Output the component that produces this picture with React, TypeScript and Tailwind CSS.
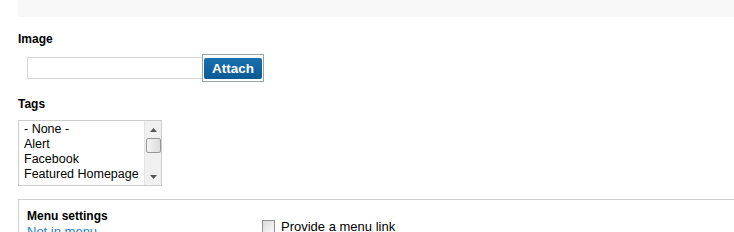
export default function App() {
  const tags = ["- None -", "Alert", "Facebook", "Featured Homepage"];

  return (
    <div
      className="w-[734px] h-[232px] overflow-hidden bg-white text-black"
      style={{ fontFamily: '"Liberation Sans", Arial, sans-serif' }}
    >
      {/* top strip */}
      <div className="ml-[18px] h-[17px] bg-[#f8f8f8]" />

      {/* Image field */}
      <div className="ml-[18px] mt-[15px] text-[12px] font-bold leading-[15px]">Image</div>
      <div className="ml-[27px] mt-[7px] flex items-center">
        <input
          type="text"
          className="w-[176px] h-[22px] border border-[#d4d4d4] outline-none"
        />
        <div className="border border-[#9aa4ad] p-px -ml-px">
          <button
            className="h-[21px] w-[58px] rounded-[2px] text-white text-[13.5px] font-bold leading-[21px] bg-[linear-gradient(#1a70b0,#0b5a94)]"
          >
            Attach
          </button>
        </div>
      </div>

      {/* Tags */}
      <div className="ml-[18px] mt-[15px] text-[12px] font-bold leading-[15px]">Tags</div>
      <div className="ml-[18px] mt-[8px] w-[144px] h-[66px] border border-[#cdcdcd] flex">
        <div className="flex-1 pl-[5px] pt-[1px] text-[12.5px] leading-[15px]">
          {tags.map((t) => (
            <div key={t} className="whitespace-nowrap">{t}</div>
          ))}
        </div>
        <div className="w-[17px] bg-[#f0f0f0] border-l border-[#e4e4e4] flex flex-col items-center">
          <div className="h-[17px] flex items-center justify-center">
            <svg width="7" height="4" viewBox="0 0 7 4">
              <path d="M0 4 L3.5 0 L7 4 Z" fill="#555" />
            </svg>
          </div>
          <div className="w-[15px] h-[15px] rounded-[2px] border border-[#979797] bg-[linear-gradient(90deg,#f4f4f4,#dcdcdc)]" />
          <div className="flex-1" />
          <div className="h-[17px] flex items-center justify-center">
            <svg width="7" height="4" viewBox="0 0 7 4">
              <path d="M0 0 L3.5 4 L7 0 Z" fill="#555" />
            </svg>
          </div>
        </div>
      </div>

      {/* Menu settings fieldset */}
      <div className="ml-[18px] mt-[13px] border-t border-l border-[#cfcfcf] h-[40px] flex">
        <div className="w-[243px] pl-[8px] pt-[9px]">
          <div className="text-[12px] font-bold leading-[15px]">Menu settings</div>
          <div className="text-[13px] leading-[15px] text-[#2b7fc7]">Not in menu</div>
        </div>
        <div className="pt-[20px] flex items-start gap-[6px]">
          <span className="w-[13px] h-[13px] border border-[#8e8f8f] bg-[linear-gradient(135deg,#dcdcdc,#f8f8f8)]" />
          <span className="text-[13px] leading-[13px]">Provide a menu link</span>
        </div>
      </div>
    </div>
  );
}
